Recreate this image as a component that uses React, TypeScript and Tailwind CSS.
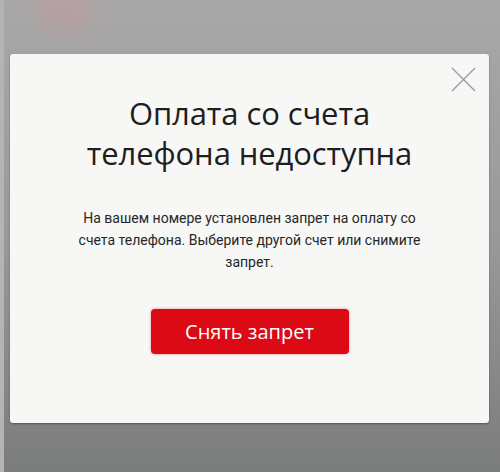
import React from 'react';

export default function App() {
  return (
    <div className="relative w-[500px] h-[472px] overflow-hidden bg-gradient-to-b from-[#a9a8a8] via-[#999999] to-[#7b7c7c] font-['Open_Sans','Noto_Sans',sans-serif]">
      {/* blurred red spot behind the overlay */}
      <div className="absolute left-[36px] top-[-10px] w-[60px] h-[40px] rounded-full bg-[#c2999b] opacity-50 blur-[10px]" />
      <div className="absolute left-0 top-0 bottom-0 w-[4px] bg-[#b4b4b4]" />

      <div className="pt-[54px] pl-[10px]">
        <div className="relative w-[479px] h-[369px] rounded-[3px] bg-[#f7f7f6] shadow-[0_1px_2px_rgba(0,0,0,0.35)] flex flex-col items-center">
          <button className="absolute right-[13px] top-[13px] w-[25px] h-[25px] text-[#9a9a9a]">
            <svg viewBox="0 0 25 25" className="w-full h-full" fill="none" stroke="currentColor" strokeWidth="1.3">
              <path d="M1 1 L24 24 M24 1 L1 24" />
            </svg>
          </button>

          <h1 className="mt-[39px] text-center text-[31px] leading-[40px] text-[#1e1e1e] font-normal tracking-[-0.1px]">
            Оплата со счета
            <br />
            телефона недоступна
          </h1>

          <p className="mt-[34px] text-center text-[14px] leading-[22px] text-[#262626] px-[40px] font-['Roboto','Open_Sans',sans-serif]">
            На вашем номере установлен запрет на оплату со
            <br />
            счета телефона. Выберите другой счет или снимите
            <br />
            запрет.
          </p>

          <button className="mt-[36px] w-[198px] h-[45px] rounded-[4px] bg-[#dc0a14] text-white text-[20px] shadow-[0_0_3px_rgba(220,10,20,0.45)]">
            Снять запрет
          </button>
        </div>
      </div>
    </div>
  );
}
